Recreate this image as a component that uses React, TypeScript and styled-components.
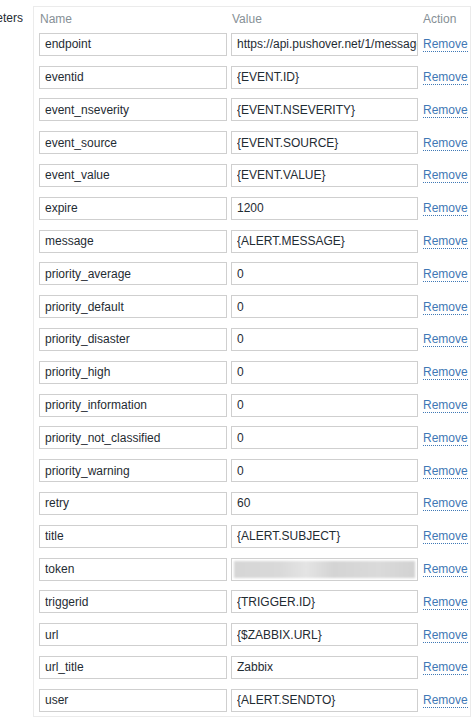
import React from 'react';
import styled, { createGlobalStyle } from 'styled-components';

const GlobalStyle = createGlobalStyle`
  html, body {
    margin: 0;
    padding: 0;
    background: #ffffff;
  }
  body {
    font-family: "Liberation Sans", Arial, sans-serif;
    font-size: 12px;
    color: #1f2c33;
  }
`;

const Page = styled.div`
  display: flex;
  align-items: flex-start;
  gap: 10px;
  padding-top: 6px;
  width: 474px;
  box-sizing: border-box;
`;

// the form label is cut by the left edge of the screenshot
const LabelCol = styled.div`
  width: 23px;
  flex: none;
  display: flex;
  justify-content: flex-end;
  overflow: hidden;
  padding-top: 4px;
  line-height: 16px;
  white-space: nowrap;
  color: #1f2c33;
`;

const Panel = styled.div`
  width: 438px;
  flex: none;
  box-sizing: border-box;
  border: 1px solid #ebebeb;
  padding: 4px 4px 4px 5px;
`;

const Table = styled.div`
  display: grid;
  grid-template-columns: 188px 187px auto;
  column-gap: 4px;
  row-gap: 9.8px;
  align-items: center;
`;

const HeadCell = styled.div`
  color: #869096;
  line-height: 16px;
  padding-left: 1px;
  margin-bottom: -4px;
`;

const Field = styled.input`
  width: 100%;
  height: 23px;
  box-sizing: border-box;
  border: 1px solid #cfcfcf;
  background: #ffffff;
  padding: 0 0 0 5px;
  margin: 0;
  font-family: "Liberation Sans", Arial, sans-serif;
  font-size: 12px;
  color: #1f2c33;
  outline: none;
`;

const HiddenField = styled.div`
  height: 23px;
  box-sizing: border-box;
  border: 1px solid #cfcfcf;
  background: #ffffff;
  padding: 2px;
`;

const Blur = styled.div`
  height: 100%;
  background: linear-gradient(
    90deg,
    #d6d6d6 0%,
    #d9d9d9 25%,
    #e4e4e4 40%,
    #d4d4d4 55%,
    #dadada 80%,
    #d2d2d2 100%
  );
  filter: blur(1px);
`;

const ActionCell = styled.div`
  padding-left: 1px;
`;

const RemoveLink = styled.a`
  color: #3f78b5;
  text-decoration: none;
  border-bottom: 1px dotted #3f78b5;
  cursor: pointer;
  line-height: 14px;
`;

interface Param {
  name: string;
  value: string;
  hidden?: boolean;
}

const params: Param[] = [
  { name: 'endpoint', value: 'https://api.pushover.net/1/messages.json' },
  { name: 'eventid', value: '{EVENT.ID}' },
  { name: 'event_nseverity', value: '{EVENT.NSEVERITY}' },
  { name: 'event_source', value: '{EVENT.SOURCE}' },
  { name: 'event_value', value: '{EVENT.VALUE}' },
  { name: 'expire', value: '1200' },
  { name: 'message', value: '{ALERT.MESSAGE}' },
  { name: 'priority_average', value: '0' },
  { name: 'priority_default', value: '0' },
  { name: 'priority_disaster', value: '0' },
  { name: 'priority_high', value: '0' },
  { name: 'priority_information', value: '0' },
  { name: 'priority_not_classified', value: '0' },
  { name: 'priority_warning', value: '0' },
  { name: 'retry', value: '60' },
  { name: 'title', value: '{ALERT.SUBJECT}' },
  { name: 'token', value: '', hidden: true },
  { name: 'triggerid', value: '{TRIGGER.ID}' },
  { name: 'url', value: '{$ZABBIX.URL}' },
  { name: 'url_title', value: 'Zabbix' },
  { name: 'user', value: '{ALERT.SENDTO}' },
];

const App: React.FC = () => {
  return (
    <>
      <GlobalStyle />
      <Page>
        <LabelCol>
          <span>Parameters</span>
        </LabelCol>
        <Panel>
          <Table>
            <HeadCell>Name</HeadCell>
            <HeadCell>Value</HeadCell>
            <HeadCell>Action</HeadCell>
            {params.map(p => (
              <React.Fragment key={p.name}>
                <Field readOnly defaultValue={p.name} />
                {p.hidden ? (
                  <HiddenField>
                    <Blur />
                  </HiddenField>
                ) : (
                  <Field readOnly defaultValue={p.value} />
                )}
                <ActionCell>
                  <RemoveLink>Remove</RemoveLink>
                </ActionCell>
              </React.Fragment>
            ))}
          </Table>
        </Panel>
      </Page>
    </>
  );
};

export default App;
